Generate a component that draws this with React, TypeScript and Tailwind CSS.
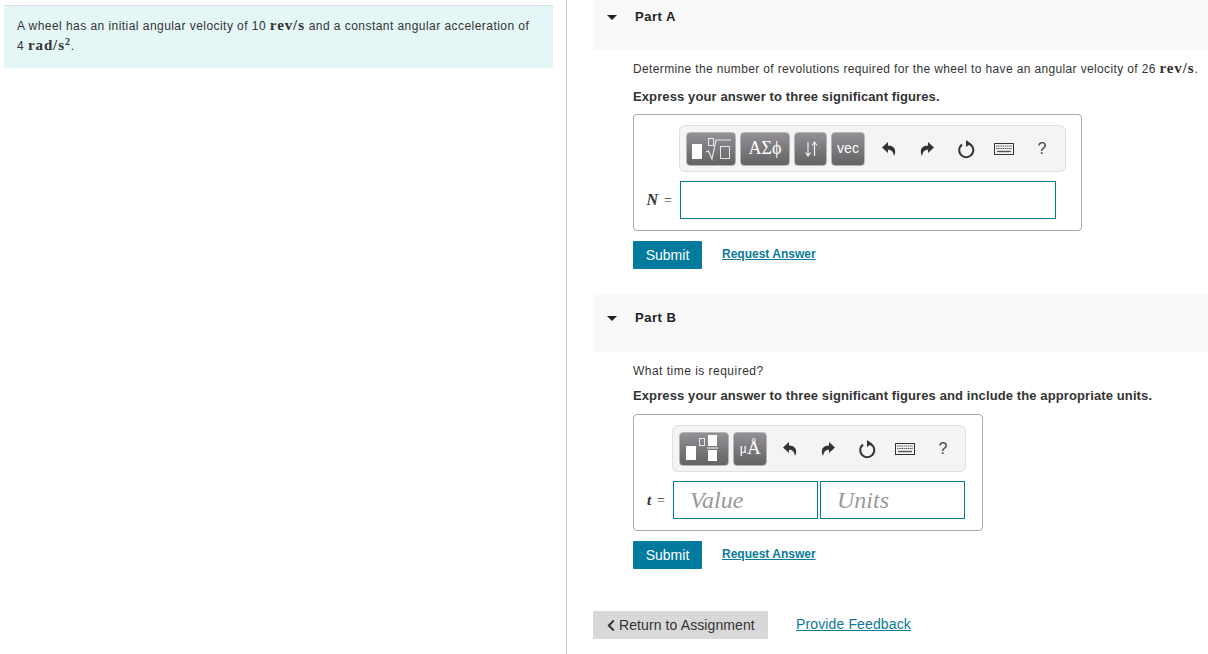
import { ReactNode } from "react";
import { FaChevronLeft } from "react-icons/fa";

const sans = "font-['Liberation_Sans',Arial,sans-serif]";
const serif = "font-['Liberation_Serif','Times_New_Roman',serif]";

// bold upright units, the way the math renderer sets them
function Unit({ children }: { children: ReactNode }) {
  return <span className={`${serif} font-bold text-[15px] tracking-[0.9px]`}>{children}</span>;
}

function ToolButton({ className, children }: { className: string; children: ReactNode }) {
  return (
    <div className={`h-[34px] rounded-[4px] border border-[#b5b5b5] bg-linear-to-b from-[#939195] to-[#636265] flex items-center justify-center text-white ${className}`}>
      {children}
    </div>
  );
}

function TemplateIcon() {
  return (
    <svg width="44" height="28" viewBox="0 0 44 28" fill="none">
      <rect x="3" y="9" width="10" height="15" fill="#fff" />
      <rect x="19.5" y="3.5" width="5" height="7" stroke="#e4e4e4" />
      <path d="M17 17l2.5-1 3.5 8 4-19h15" stroke="#e8e8e8" strokeWidth="1.2" />
      <rect x="31.5" y="11.5" width="9" height="12" stroke="#e4e4e4" />
    </svg>
  );
}

function FractionIcon() {
  return (
    <svg width="40" height="28" viewBox="0 0 40 28" fill="none">
      <rect x="2" y="11" width="10" height="14" fill="#fff" />
      <rect x="15.5" y="3.5" width="5" height="7" stroke="#e4e4e4" />
      <rect x="24" y="0" width="9" height="11" fill="#fff" />
      <rect x="23" y="12.5" width="11" height="1" fill="#fff" />
      <rect x="24" y="15" width="9" height="11" fill="#fff" />
    </svg>
  );
}

function ArrowsIcon() {
  return (
    <svg width="14" height="16" viewBox="0 0 14 16" fill="none" stroke="#eee" strokeWidth="1.2">
      <path d="M4 1v14M1.5 11.5L4 15l2.5-3.5" />
      <path d="M10.5 15V1M8 4.5L10.5 1 13 4.5" />
    </svg>
  );
}

function UndoIcon({ flip }: { flip?: boolean }) {
  return (
    <svg width="14" height="14" viewBox="0 0 14 14" className={flip ? "-scale-x-100" : ""}>
      <path d="M6 0L0 5.5 6 11V7.8c3 0 5 1.2 6 6.2 2-4 2.2-10.4-6-10.6z" fill="#333" />
    </svg>
  );
}

function ResetIcon() {
  return (
    <svg width="18" height="20" viewBox="0 0 18 20" fill="none">
      <path d="M5 5.6A7 7 0 1 0 10 4.2" stroke="#333" strokeWidth="2" />
      <path d="M9 1l5 3.5L9 8z" fill="#333" />
    </svg>
  );
}

function KeyboardIcon() {
  return (
    <svg width="20" height="12" viewBox="0 0 20 12" fill="none">
      <rect x="0.5" y="0.5" width="19" height="11" fill="#f4f4f4" stroke="#333" />
      <path d="M2 3h16M2 5.5h16" stroke="#555" strokeWidth="1.2" strokeDasharray="1.5 0.7" />
      <path d="M3 8.5h14" stroke="#555" strokeWidth="1.4" />
    </svg>
  );
}

// undo, redo, reset, keyboard, help: same spacing in both toolbars
function EditTools() {
  return (
    <div className="flex items-center text-[#333]">
      <div className="w-[38px] flex justify-center"><UndoIcon /></div>
      <div className="w-[38px] flex justify-center"><UndoIcon flip /></div>
      <div className="w-[39px] flex justify-center"><ResetIcon /></div>
      <div className="w-[38px] flex justify-center"><KeyboardIcon /></div>
      <div className={`${sans} w-[38px] text-center text-[16px] text-[#444]`}>?</div>
    </div>
  );
}

function Actions() {
  return (
    <div className="flex items-start">
      <button className="w-[69px] h-[28px] bg-[#027a9e] rounded-[1px] text-white text-[14px]">Submit</button>
      <a className="ml-5 mt-[5px] text-[12px] leading-[16px] font-bold text-[#0b7a9b] underline">Request Answer</a>
    </div>
  );
}

function PartHeader({ label, className, arrowClass, labelClass }: { label: string; className: string; arrowClass: string; labelClass: string }) {
  return (
    <div className={`bg-[#f9f9f9] flex items-start ${className}`}>
      <div className={`ml-[14px] w-0 h-0 border-x-[5px] border-x-transparent border-t-[5px] border-t-[#222] ${arrowClass}`} />
      <div className={`ml-[18px] text-[13px] leading-[16px] font-bold text-[#222] tracking-[0.5px] ${labelClass}`}>{label}</div>
    </div>
  );
}

export default function App() {
  return (
    <div className={`${sans} flex w-[1208px] h-[654px] overflow-hidden bg-white text-[#333]`}>
      <div className="w-[567px] shrink-0 border-r border-[#c3d4e0] pt-[5px] pl-1">
        <div className="w-[549px] h-[63px] bg-[#e5f6f7] border-t border-[#d8e4e6] pl-[13px] pt-[10px] text-[12px] leading-[19px] tracking-[0.45px]">
          <div>
            A wheel has an initial angular velocity of 10 <Unit>rev/s</Unit> and a constant angular acceleration of
          </div>
          <div>
            4 <Unit>rad/s<sup className="text-[10px] leading-none">2</sup></Unit>.
          </div>
        </div>
      </div>

      <div className="flex-1 pl-[26px]">
        <PartHeader label="Part A" className="h-[50px]" arrowClass="mt-[15px]" labelClass="mt-[9px]" />
        <div className="pl-[40px]">
          <div className="mt-[9px] h-[18px] leading-[18px] text-[12px] whitespace-nowrap tracking-[0.36px]">
            Determine the number of revolutions required for the wheel to have an angular velocity of 26 <Unit>rev/s</Unit>.
          </div>
          <div className="mt-[11px] h-[18px] leading-[18px] text-[13px] font-bold tracking-[0.11px]">
            Express your answer to three significant figures.
          </div>
          <div className="mt-[8px] w-[449px] h-[117px] rounded-[4px] border border-[#a9a9a9]">
            <div className="ml-[45px] mt-[10px] w-[387px] h-[47px] rounded-[6px] border border-[#e0e0e0] bg-[#f4f4f4] flex items-center pl-[6px]">
              <ToolButton className="w-[50px]"><TemplateIcon /></ToolButton>
              <ToolButton className={`w-[50px] ml-1 ${serif} text-[18px] text-[#f0f0f0]`}>ΑΣϕ</ToolButton>
              <ToolButton className="w-[33px] ml-1"><ArrowsIcon /></ToolButton>
              <ToolButton className="w-[34px] ml-1 text-[14px] text-[#f0f0f0]">vec</ToolButton>
              <div className="ml-[5px]"><EditTools /></div>
            </div>
            <div className="mt-[9px] flex items-center">
              <div className={`${serif} w-[46px] text-right pr-[8px] text-[14px] whitespace-nowrap`}>
                <b className="text-[16px]"><i>N</i></b><span className="ml-[6px]">=</span>
              </div>
              <div className="w-[376px] h-[38px] border border-[#017a9b] bg-white" />
            </div>
          </div>
          <div className="mt-[10px]"><Actions /></div>
        </div>

        <PartHeader label="Part B" className="h-[57px] mt-[26px]" arrowClass="mt-[21px]" labelClass="mt-[15px]" />
        <div className="pl-[40px]">
          <div className="mt-[10px] h-[18px] leading-[18px] text-[12px] tracking-[0.48px]">What time is required?</div>
          <div className="mt-[7px] h-[18px] leading-[18px] text-[13px] font-bold tracking-[0.11px]">
            Express your answer to three significant figures and include the appropriate units.
          </div>
          <div className="mt-[9px] w-[350px] h-[117px] rounded-[4px] border border-[#a9a9a9]">
            <div className="ml-[38px] mt-[10px] w-[294px] h-[47px] rounded-[6px] border border-[#e0e0e0] bg-[#f4f4f4] flex items-center pl-[6px]">
              <ToolButton className="w-[50px]"><FractionIcon /></ToolButton>
              <ToolButton className={`w-[34px] ml-1 ${serif} text-[#f0f0f0]`}>
                <span className="text-[14px]">μ</span><span className="text-[19px]">Å</span>
              </ToolButton>
              <div className="ml-1"><EditTools /></div>
            </div>
            <div className="mt-[9px] flex items-center">
              <div className={`${serif} w-[39px] text-right pr-[8px] text-[14px] whitespace-nowrap`}>
                <i className="font-bold text-[15px]">t</i><span className="ml-[6px]">=</span>
              </div>
              <div className={`${serif} w-[145px] h-[38px] border border-[#017a9b] pl-[16px] text-[24px] leading-[36px] italic text-[#999]`}>Value</div>
              <div className={`${serif} ml-[2px] w-[145px] h-[38px] border border-[#017a9b] pl-[16px] text-[24px] leading-[36px] italic text-[#999]`}>Units</div>
            </div>
          </div>
          <div className="mt-[10px]"><Actions /></div>
        </div>

        <div className="mt-[42px] flex items-start">
          <button className="w-[175px] h-[28px] bg-[#d8d8d8] rounded-[1px] flex items-center pl-[13px] text-[14px] text-[#333] tracking-[0.1px]">
            <FaChevronLeft className="w-[10px] h-[13px] mr-[3px]" />
            Return to Assignment
          </button>
          <a className="ml-7 mt-[4px] text-[14px] leading-[18px] text-[#0b7a9b] underline tracking-[0.13px]">Provide Feedback</a>
        </div>
      </div>
    </div>
  );
}
